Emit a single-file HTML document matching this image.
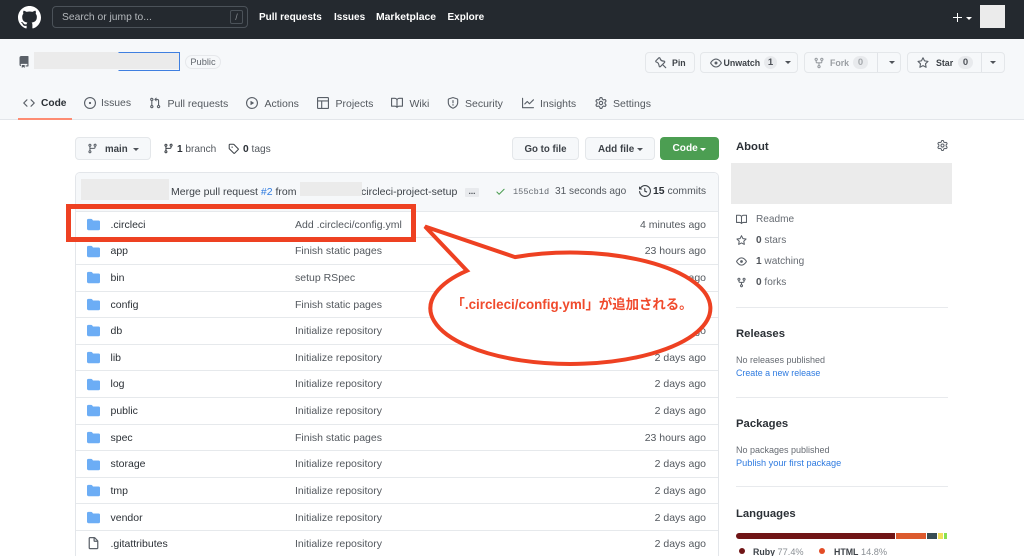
<!DOCTYPE html>
<html lang="ja"><head><meta charset="utf-8"><title>GitHub repository</title>
<style>
*{box-sizing:border-box}
html,body{margin:0;padding:0}
body{width:1024px;height:556px;overflow:hidden;position:relative;background:#fff;font-family:"Liberation Sans","Noto Sans CJK JP",sans-serif;font-size:10.5px;color:#24292f}
#p{position:absolute;left:0;top:0;width:1024px;height:556px;overflow:hidden;filter:blur(.3px)}
.a{position:absolute}
.t{position:absolute;white-space:nowrap;line-height:14px;height:14px;color:#53585e;margin-top:1px}
.b{font-weight:700}
.d{color:#2b3036}
.w{color:#fff;font-weight:700;font-size:10px}
.btn{position:absolute;background:#f6f8fa;border:1px solid #e4e7ea;border-radius:4px}
.line{position:absolute;left:76px;width:642px;height:1px;background:#e6e9ec}
.ic{position:absolute;fill:#5a6068}
.fo{position:absolute;left:87px;width:13px;height:13px;fill:#6cadf5}
.r{right:318px}
.car{position:absolute;width:0;height:0;border-left:3px solid transparent;border-right:3px solid transparent;border-top:3px solid #4f5359}
.cnt{position:absolute;background:#e8eaed;border-radius:8px;height:13px;text-align:center;line-height:13px;font-size:9.5px;font-weight:700;color:#4f5359}
.h{font-size:11.3px;font-weight:700;color:#2b3036}
.s{font-size:9px;color:#666b72}
.l{font-size:8.9px;color:#2f7be0}
.hr{position:absolute;left:736px;width:212px;height:1px;background:#e8eaed}
.bt{font-size:8.8px;color:#3d4248}
.st{font-size:10.1px;color:#666b72}
.st b{color:#4f5359}
</style></head><body><div id="p">
<svg width="0" height="0" style="position:absolute"><defs>
<symbol id="gh" viewBox="0 0 16 16"><path d="M8 0C3.58 0 0 3.58 0 8c0 3.54 2.29 6.53 5.47 7.59.4.07.55-.17.55-.38 0-.19-.01-.82-.01-1.49-2.01.37-2.53-.49-2.69-.94-.09-.23-.48-.94-.82-1.13-.28-.15-.68-.52-.01-.53.63-.01 1.08.58 1.23.82.72 1.21 1.87.87 2.33.66.07-.52.28-.87.51-1.07-1.78-.2-3.64-.89-3.64-3.95 0-.87.31-1.59.82-2.15-.08-.2-.36-1.02.08-2.12 0 0 .67-.21 2.2.82.64-.18 1.32-.27 2-.27.68 0 1.36.09 2 .27 1.53-1.04 2.2-.82 2.2-.82.44 1.1.16 1.92.08 2.12.51.56.82 1.27.82 2.15 0 3.07-1.87 3.75-3.65 3.95.29.25.54.73.54 1.48 0 1.07-.01 1.93-.01 2.2 0 .21.15.46.55.38A8.013 8.013 0 0016 8c0-4.42-3.58-8-8-8z"/></symbol>
<symbol id="repo" viewBox="0 0 16 16"><path d="M2 2.5A2.5 2.5 0 014.5 0h8.75a.75.75 0 01.75.75v12.5a.75.75 0 01-.75.75h-2.5a.75.75 0 110-1.5h1.75v-2h-8a1 1 0 00-.714 1.7.75.75 0 01-1.072 1.05A2.495 2.495 0 012 11.5v-9zm10.5-1V9h-8c-.356 0-.694.074-1 .208V2.5a1 1 0 011-1h8zM5 12.25v3.25a.25.25 0 00.4.2l1.45-1.087a.25.25 0 01.3 0L8.6 15.7a.25.25 0 00.4-.2v-3.25a.25.25 0 00-.25-.25h-3.5a.25.25 0 00-.25.25z"/></symbol>
<symbol id="code" viewBox="0 0 16 16"><path d="M4.72 3.22a.75.75 0 011.06 1.06L2.06 8l3.72 3.72a.75.75 0 11-1.06 1.06L.47 8.53a.75.75 0 010-1.06l4.25-4.25zm6.56 0a.75.75 0 10-1.06 1.06L13.94 8l-3.72 3.72a.75.75 0 101.06 1.06l4.25-4.25a.75.75 0 000-1.06l-4.25-4.25z"/></symbol>
<symbol id="issue" viewBox="0 0 16 16"><path d="M8 9.5a1.5 1.5 0 100-3 1.5 1.5 0 000 3z"/><path fill-rule="evenodd" d="M8 0a8 8 0 100 16A8 8 0 008 0zM1.5 8a6.5 6.5 0 1113 0 6.5 6.5 0 01-13 0z"/></symbol>
<symbol id="pr" viewBox="0 0 16 16"><path fill-rule="evenodd" d="M7.177 3.073L9.573.677A.25.25 0 0110 .854v4.792a.25.25 0 01-.427.177L7.177 3.427a.25.25 0 010-.354zM3.75 2.5a.75.75 0 100 1.5.75.75 0 000-1.5zm-2.25.75a2.25 2.25 0 113 2.122v5.256a2.251 2.251 0 11-1.5 0V5.372A2.25 2.25 0 011.5 3.25zM11 2.5h-1V4h1a1 1 0 011 1v5.628a2.251 2.251 0 101.5 0V5A2.5 2.5 0 0011 2.5zm1 10.25a.75.75 0 111.5 0 .75.75 0 01-1.5 0zM3.75 12a.75.75 0 100 1.5.75.75 0 000-1.5z"/></symbol>
<symbol id="play" viewBox="0 0 16 16"><path fill-rule="evenodd" d="M1.5 8a6.5 6.5 0 1113 0 6.5 6.5 0 01-13 0zM8 0a8 8 0 100 16A8 8 0 008 0zM6.379 5.227A.25.25 0 006 5.442v5.117a.25.25 0 00.379.214l4.264-2.559a.25.25 0 000-.428L6.379 5.227z"/></symbol>
<symbol id="proj" viewBox="0 0 16 16"><path fill-rule="evenodd" d="M1.75 0A1.75 1.75 0 000 1.75v12.5C0 15.216.784 16 1.75 16h12.5A1.75 1.75 0 0016 14.25V1.75A1.75 1.75 0 0014.25 0H1.75zM1.5 1.75a.25.25 0 01.25-.25h12.5a.25.25 0 01.25.25V4.5h-13V1.75zM1.5 6h4v8.5H1.75a.25.25 0 01-.25-.25V6zm5.5 0h7.5v8.25a.25.25 0 01-.25.25H7V6z"/></symbol>
<symbol id="book" viewBox="0 0 16 16"><path fill-rule="evenodd" d="M0 1.75A.75.75 0 01.75 1h4.253c1.227 0 2.317.59 3 1.501A3.744 3.744 0 0111.006 1h4.245a.75.75 0 01.75.75v10.5a.75.75 0 01-.75.75h-4.507a2.25 2.25 0 00-1.591.659l-.622.621a.75.75 0 01-1.06 0l-.622-.621A2.25 2.25 0 005.258 13H.75a.75.75 0 01-.75-.75V1.75zm8.755 3a2.25 2.25 0 012.25-2.25H14.5v9h-3.757c-.71 0-1.4.201-1.992.572l.004-7.322zm-1.504 7.324l.004-5.073-.002-2.253A2.25 2.25 0 005.003 2.5H1.5v9h3.757a3.75 3.75 0 011.994.574z"/></symbol>
<symbol id="shield" viewBox="0 0 16 16"><path fill-rule="evenodd" d="M7.467.133a1.75 1.75 0 011.066 0l5.25 1.68A1.75 1.75 0 0115 3.48V7c0 1.566-.32 3.182-1.303 4.682-.983 1.498-2.585 2.813-5.032 3.855a1.7 1.7 0 01-1.33 0c-2.447-1.042-4.049-2.357-5.032-3.855C1.32 10.182 1 8.566 1 7V3.48a1.75 1.75 0 011.217-1.667l5.25-1.68zm.61 1.429a.25.25 0 00-.153 0l-5.25 1.68a.25.25 0 00-.174.238V7c0 1.358.275 2.666 1.057 3.86.784 1.194 2.121 2.34 4.366 3.297a.2.2 0 00.154 0c2.245-.956 3.582-2.104 4.366-3.298C13.225 9.666 13.5 8.36 13.5 7V3.48a.25.25 0 00-.174-.237l-5.25-1.68zM9 10.5a1 1 0 11-2 0 1 1 0 012 0zm-.25-5.75a.75.75 0 10-1.5 0v3a.75.75 0 001.5 0v-3z"/></symbol>
<symbol id="graph" viewBox="0 0 16 16"><path d="M1.5 1.75a.75.75 0 00-1.5 0v12.5c0 .414.336.75.75.75h14.5a.75.75 0 000-1.5H1.5V1.75zm14.28 2.53a.75.75 0 00-1.06-1.06L10 7.94 7.53 5.47a.75.75 0 00-1.06 0L3.22 8.72a.75.75 0 001.06 1.06L7 7.06l2.47 2.47a.75.75 0 001.06 0l5.25-5.25z"/></symbol>
<symbol id="gear" viewBox="0 0 16 16"><path fill-rule="evenodd" d="M7.429 1.525a6.593 6.593 0 011.142 0c.036.003.108.036.137.146l.289 1.105c.147.56.55.967.997 1.189.174.086.341.183.501.29.417.278.97.423 1.53.27l1.102-.303c.11-.03.175.016.195.046.219.31.41.641.573.989.014.031.022.11-.059.19l-.815.806c-.411.406-.562.957-.53 1.456a4.588 4.588 0 010 .582c-.032.499.119 1.05.53 1.456l.815.806c.08.08.073.159.059.19a6.494 6.494 0 01-.573.99c-.02.029-.086.074-.195.045l-1.103-.303c-.559-.153-1.112-.008-1.529.27-.16.107-.327.204-.5.29-.449.222-.851.628-.998 1.189l-.289 1.105c-.029.11-.101.143-.137.146a6.613 6.613 0 01-1.142 0c-.036-.003-.108-.037-.137-.146l-.289-1.105c-.147-.56-.55-.967-.997-1.189a4.502 4.502 0 01-.501-.29c-.417-.278-.97-.423-1.53-.27l-1.102.303c-.11.03-.175-.016-.195-.046a6.492 6.492 0 01-.573-.989c-.014-.031-.022-.11.059-.19l.815-.806c.411-.406.562-.957.53-1.456a4.587 4.587 0 010-.582c.032-.499-.119-1.05-.53-1.456l-.815-.806c-.08-.08-.073-.159-.059-.19a6.44 6.44 0 01.573-.99c.02-.029.086-.075.195-.045l1.103.303c.559.153 1.112.008 1.529-.27.16-.107.327-.204.5-.29.449-.222.851-.628.998-1.189l.289-1.105c.029-.11.101-.143.137-.146zM8 0c-.236 0-.47.01-.701.03-.743.065-1.29.615-1.458 1.261l-.29 1.106c-.017.066-.078.158-.211.224a5.994 5.994 0 00-.668.386c-.123.082-.233.09-.3.071L3.27 2.776c-.644-.177-1.392.02-1.82.63a7.977 7.977 0 00-.704 1.217c-.315.675-.111 1.422.363 1.891l.815.806c.05.048.098.147.088.294a6.084 6.084 0 000 .772c.01.147-.038.246-.088.294l-.815.806c-.474.469-.678 1.216-.363 1.891.2.428.436.835.704 1.218.428.609 1.176.806 1.82.63l1.103-.303c.066-.019.176-.011.299.071.213.143.436.272.668.386.133.066.194.158.212.224l.289 1.106c.169.646.715 1.196 1.458 1.26a8.094 8.094 0 001.402 0c.743-.064 1.29-.614 1.458-1.26l.29-1.106c.017-.066.078-.158.211-.224a5.98 5.98 0 00.668-.386c.123-.082.233-.09.3-.071l1.102.302c.644.177 1.392-.02 1.82-.63.268-.382.505-.789.704-1.217.315-.675.111-1.422-.364-1.891l-.814-.806c-.05-.048-.098-.147-.088-.294a6.1 6.1 0 000-.772c-.01-.147.039-.246.088-.294l.814-.806c.475-.469.679-1.216.364-1.891a7.992 7.992 0 00-.704-1.218c-.428-.609-1.176-.806-1.82-.63l-1.103.303c-.066.019-.176.011-.299-.071a5.991 5.991 0 00-.668-.386c-.133-.066-.194-.158-.212-.224L10.16 1.29C9.99.645 9.444.095 8.701.031A8.094 8.094 0 008 0zm1.5 8a1.5 1.5 0 11-3 0 1.5 1.5 0 013 0zM11 8a3 3 0 11-6 0 3 3 0 016 0z"/></symbol>
<symbol id="pin" viewBox="0 0 16 16"><path fill-rule="evenodd" d="M4.456.734a1.75 1.75 0 012.826.504l.613 1.327a3.081 3.081 0 002.084 1.707l2.454.584c1.332.317 1.8 1.972.832 2.94L11.06 10l3.72 3.72a.75.75 0 11-1.061 1.06L10 11.06l-2.204 2.205c-.968.968-2.623.5-2.94-.832l-.584-2.454a3.081 3.081 0 00-1.707-2.084l-1.327-.613a1.75 1.75 0 01-.504-2.826L4.456.734zM5.92 1.866a.25.25 0 00-.404-.072L1.794 5.516a.25.25 0 00.072.404l1.328.613A4.582 4.582 0 015.73 9.63l.584 2.454a.25.25 0 00.42.12l5.47-5.47a.25.25 0 00-.12-.42L9.63 6.13a4.581 4.581 0 01-3.098-2.537L5.92 1.866z"/></symbol>
<symbol id="eye" viewBox="0 0 16 16"><path fill-rule="evenodd" d="M1.679 7.932c.412-.621 1.242-1.75 2.366-2.717C5.175 4.242 6.527 3.5 8 3.5c1.473 0 2.824.742 3.955 1.715 1.124.967 1.954 2.096 2.366 2.717a.119.119 0 010 .136c-.412.621-1.242 1.75-2.366 2.717C10.825 11.758 9.473 12.5 8 12.5c-1.473 0-2.824-.742-3.955-1.715C2.92 9.818 2.09 8.69 1.679 8.068a.119.119 0 010-.136zM8 2c-1.981 0-3.67.992-4.933 2.078C1.797 5.169.88 6.423.43 7.1a1.619 1.619 0 000 1.798c.45.678 1.367 1.932 2.637 3.024C4.329 13.008 6.019 14 8 14c1.981 0 3.67-.992 4.933-2.078 1.27-1.091 2.187-2.345 2.637-3.023a1.619 1.619 0 000-1.798c-.45-.678-1.367-1.932-2.637-3.023C11.671 2.992 9.981 2 8 2zm0 8a2 2 0 100-4 2 2 0 000 4z"/></symbol>
<symbol id="fork" viewBox="0 0 16 16"><path fill-rule="evenodd" d="M5 3.25a.75.75 0 11-1.5 0 .75.75 0 011.5 0zm0 2.122a2.25 2.25 0 10-1.5 0v.878A2.25 2.25 0 005.75 8.5h1.5v2.128a2.251 2.251 0 101.5 0V8.5h1.5a2.25 2.25 0 002.25-2.25v-.878a2.25 2.25 0 10-1.5 0v.878a.75.75 0 01-.75.75h-4.5A.75.75 0 015 6.25v-.878zm3.75 7.378a.75.75 0 11-1.5 0 .75.75 0 011.5 0zm3-8.75a.75.75 0 100-1.5.75.75 0 000 1.5z"/></symbol>
<symbol id="star" viewBox="0 0 16 16"><path fill-rule="evenodd" d="M8 .25a.75.75 0 01.673.418l1.882 3.815 4.21.612a.75.75 0 01.416 1.279l-3.046 2.97.719 4.192a.75.75 0 01-1.088.791L8 12.347l-3.766 1.98a.75.75 0 01-1.088-.79l.72-4.194L.818 6.374a.75.75 0 01.416-1.28l4.21-.611L7.327.668A.75.75 0 018 .25zm0 2.445L6.615 5.5a.75.75 0 01-.564.41l-3.097.45 2.24 2.184a.75.75 0 01.216.664l-.528 3.084 2.769-1.456a.75.75 0 01.698 0l2.77 1.456-.53-3.084a.75.75 0 01.216-.664l2.24-2.183-3.096-.45a.75.75 0 01-.564-.41L8 2.694z"/></symbol>
<symbol id="branch" viewBox="0 0 16 16"><path fill-rule="evenodd" d="M11.75 2.5a.75.75 0 100 1.5.75.75 0 000-1.5zm-2.25.75a2.25 2.25 0 113 2.122V6A2.5 2.5 0 0110 8.5H6a1 1 0 00-1 1v1.128a2.251 2.251 0 11-1.5 0V5.372a2.25 2.25 0 111.5 0v1.836A2.492 2.492 0 016 7h4a1 1 0 001-1v-.628A2.25 2.25 0 019.5 3.25zM4.25 12a.75.75 0 100 1.5.75.75 0 000-1.5zM3.5 3.25a.75.75 0 111.5 0 .75.75 0 01-1.5 0z"/></symbol>
<symbol id="tag" viewBox="0 0 16 16"><path fill-rule="evenodd" d="M2.5 7.775V2.75a.25.25 0 01.25-.25h5.025a.25.25 0 01.177.073l6.25 6.25a.25.25 0 010 .354l-5.025 5.025a.25.25 0 01-.354 0l-6.25-6.25a.25.25 0 01-.073-.177zm-1.5 0V2.75C1 1.784 1.784 1 2.75 1h5.025c.464 0 .91.184 1.238.513l6.25 6.25a1.75 1.75 0 010 2.474l-5.026 5.026a1.75 1.75 0 01-2.474 0l-6.25-6.25A1.75 1.75 0 011 7.775zM6 5a1 1 0 100 2 1 1 0 000-2z"/></symbol>
<symbol id="hist" viewBox="0 0 16 16"><path fill-rule="evenodd" d="M1.643 3.143L.427 1.927A.25.25 0 000 2.104V5.75c0 .138.112.25.25.25h3.646a.25.25 0 00.177-.427L2.715 4.215a6.5 6.5 0 11-1.18 4.458.75.75 0 10-1.493.154 8.001 8.001 0 101.6-5.684zM7.75 4a.75.75 0 01.75.75v2.992l2.028.812a.75.75 0 01-.557 1.392l-2.5-1A.75.75 0 017 8.25v-3.5A.75.75 0 017.75 4z"/></symbol>
<symbol id="check" viewBox="0 0 16 16"><path d="M13.78 4.22a.75.75 0 010 1.06l-7.25 7.25a.75.75 0 01-1.06 0L2.22 9.28a.75.75 0 011.06-1.06L6 10.94l6.72-6.72a.75.75 0 011.06 0z"/></symbol>
<symbol id="folder" viewBox="0 0 16 16"><path d="M1.75 1A1.75 1.75 0 000 2.75v10.5C0 14.216.784 15 1.75 15h12.5A1.75 1.75 0 0016 13.25v-8.5A1.75 1.75 0 0014.25 3H7.5a.25.25 0 01-.2-.1l-.9-1.2C6.07 1.26 5.55 1 5 1H1.75z"/></symbol>
<symbol id="file" viewBox="0 0 16 16"><path fill-rule="evenodd" d="M3.75 1.5a.25.25 0 00-.25.25v11.5c0 .138.112.25.25.25h8.5a.25.25 0 00.25-.25V6H9.75A1.75 1.75 0 018 4.25V1.5H3.75zm5.75.56v2.19c0 .138.112.25.25.25h2.19L9.5 2.06zM2 1.75C2 .784 2.784 0 3.75 0h5.086c.464 0 .909.184 1.237.513l3.414 3.414c.329.328.513.773.513 1.237v8.086A1.75 1.75 0 0112.25 15h-8.5A1.75 1.75 0 012 13.25V1.75z"/></symbol>
</defs></svg>

<!-- header -->
<div class="a" style="left:0;top:0;width:1024px;height:39px;background:#24292f"></div>
<svg class="a" style="left:18px;top:6px;width:23px;height:23px;fill:#fff"><use href="#gh"/></svg>
<div class="a" style="left:52px;top:6px;width:196px;height:22px;border:1px solid #4b5259;border-radius:4px"></div>
<div class="t" style="left:62px;top:10px;color:#b4b8bc;font-size:10.3px">Search or jump to...</div>
<div class="a" style="left:230px;top:10px;width:13px;height:14px;border:1px solid #4b5259;border-radius:2px;color:#8b9096;font-size:9px;line-height:12px;text-align:center">/</div>
<div class="t w" style="left:259px;top:10px">Pull requests</div>
<div class="t w" style="left:334px;top:10px">Issues</div>
<div class="t w" style="left:376px;top:10px;font-size:10.4px">Marketplace</div>
<div class="t w" style="left:447.5px;top:10px">Explore</div>
<div class="a" style="left:953px;top:16.5px;width:9px;height:1.4px;background:#fff"></div>
<div class="a" style="left:957px;top:12.5px;width:1.4px;height:9px;background:#fff"></div>
<div class="car" style="left:966px;top:16.5px;border-top-color:#fff"></div>
<div class="a" style="left:980px;top:5px;width:25px;height:23px;background:#ebebeb"></div>

<!-- subnav -->
<div class="a" style="left:0;top:39px;width:1024px;height:81px;background:#f6f8fa;border-bottom:1px solid #e3e6ea"></div>
<svg class="ic" style="left:18px;top:56px;width:12px;height:12px"><use href="#repo"/></svg>
<div class="a" style="left:34px;top:52px;width:146px;height:17px;background:#ebebeb"></div>
<div class="a" style="left:118px;top:52px;width:62px;height:19px;border:1px solid transparent;border-top-color:#3f7fe0;border-right-color:#3f7fe0;border-bottom-color:#3f7fe0"></div>
<div class="a" style="left:185px;top:55px;width:36px;height:14px;border:1px solid #e6e8eb;border-radius:7px;font-size:9.3px;line-height:12px;text-align:center;color:#62676e">Public</div>

<div class="btn" style="left:645px;top:52px;width:50px;height:21px"></div>
<svg class="ic" style="left:655px;top:57px;width:12px;height:12px"><use href="#pin"/></svg>
<div class="t b bt" style="left:672px;top:54.5px">Pin</div>
<div class="btn" style="left:700px;top:52px;width:98px;height:21px"></div>
<svg class="ic" style="left:709.5px;top:57px;width:12px;height:12px"><use href="#eye"/></svg>
<div class="t b bt" style="left:723.5px;top:54.5px">Unwatch</div>
<div class="cnt" style="left:764px;top:56px;width:13px">1</div>
<div class="car" style="left:785px;top:61px"></div>
<div class="btn" style="left:804px;top:52px;width:97px;height:21px"></div>
<div class="a" style="left:877px;top:53px;width:1px;height:19px;background:#e1e4e8"></div>
<svg class="ic" style="left:813px;top:57px;width:12px;height:12px;fill:#9a9ea3"><use href="#fork"/></svg>
<div class="t b bt" style="left:830px;top:54.5px;color:#9a9ea3">Fork</div>
<div class="cnt" style="left:853px;top:56px;width:15px;color:#a5a9ad">0</div>
<div class="car" style="left:889px;top:61px"></div>
<div class="btn" style="left:907px;top:52px;width:98px;height:21px"></div>
<div class="a" style="left:981px;top:53px;width:1px;height:19px;background:#e1e4e8"></div>
<svg class="ic" style="left:917px;top:57px;width:12px;height:12px"><use href="#star"/></svg>
<div class="t b bt" style="left:936px;top:54.5px">Star</div>
<div class="cnt" style="left:958px;top:56px;width:15px">0</div>
<div class="car" style="left:990px;top:61px"></div>

<!-- tabs -->
<svg class="ic" style="left:23px;top:97px;width:12px;height:12px"><use href="#code"/></svg>
<div class="t b d" style="left:41px;top:96px;font-size:10.2px">Code</div>
<svg class="ic" style="left:84px;top:97px;width:12px;height:12px"><use href="#issue"/></svg>
<div class="t" style="left:101px;top:96px;font-size:10.4px">Issues</div>
<svg class="ic" style="left:149px;top:97px;width:12px;height:12px"><use href="#pr"/></svg>
<div class="t" style="left:167.5px;top:96px">Pull requests</div>
<svg class="ic" style="left:246px;top:97px;width:12px;height:12px"><use href="#play"/></svg>
<div class="t" style="left:264.5px;top:96px">Actions</div>
<svg class="ic" style="left:317px;top:97px;width:12px;height:12px"><use href="#proj"/></svg>
<div class="t" style="left:335.5px;top:96px">Projects</div>
<svg class="ic" style="left:391px;top:97px;width:12px;height:12px"><use href="#book"/></svg>
<div class="t" style="left:409.5px;top:96px">Wiki</div>
<svg class="ic" style="left:446.5px;top:97px;width:12px;height:12px"><use href="#shield"/></svg>
<div class="t" style="left:465px;top:96px">Security</div>
<svg class="ic" style="left:521.5px;top:97px;width:12px;height:12px"><use href="#graph"/></svg>
<div class="t" style="left:540px;top:96px">Insights</div>
<svg class="ic" style="left:595px;top:97px;width:12px;height:12px"><use href="#gear"/></svg>
<div class="t" style="left:613px;top:96px">Settings</div>
<div class="a" style="left:18px;top:118px;width:54px;height:2px;background:#fd8c73"></div>

<!-- toolbar -->
<div class="btn" style="left:75px;top:137px;width:76px;height:23px"></div>
<svg class="ic" style="left:87px;top:143px;width:11px;height:11px"><use href="#branch"/></svg>
<div class="t b" style="left:105px;top:142px;color:#3d4248;font-size:9.7px">main</div>
<div class="car" style="left:133px;top:148px"></div>
<svg class="ic" style="left:163px;top:143px;width:11px;height:11px;fill:#3d4248"><use href="#branch"/></svg>
<div class="t" style="left:177px;top:142px;font-size:10.1px"><b class="d">1</b> branch</div>
<svg class="ic" style="left:228px;top:143px;width:11px;height:11px;fill:#3d4248"><use href="#tag"/></svg>
<div class="t" style="left:243px;top:142px;font-size:10.2px"><b class="d">0</b> tags</div>
<div class="btn" style="left:512px;top:137px;width:67px;height:23px;text-align:center;line-height:23px;font-weight:700;font-size:9.7px;color:#3d4248">Go to file</div>
<div class="btn" style="left:585px;top:137px;width:70px;height:23px;line-height:23px;padding-left:12px;font-weight:700;font-size:9.9px;color:#3d4248">Add file</div>
<div class="car" style="left:637px;top:148px"></div>
<div class="a" style="left:660px;top:137px;width:59px;height:23px;background:#4c9e52;border-radius:4px;color:#fff;font-weight:700;font-size:10.1px;line-height:24px;padding-left:12.5px">Code</div>
<div class="car" style="left:700px;top:148px;border-top-color:#fff"></div>

<!-- file table -->
<div class="a" style="left:75px;top:172px;width:644px;height:384px;border:1px solid #e3e6ea;border-bottom:0;border-radius:5px 5px 0 0"></div>
<div class="a" style="left:76px;top:173px;width:642px;height:38px;background:#f6f8fa;border-radius:4px 4px 0 0"></div>
<div class="a" style="left:81px;top:179px;width:88px;height:21px;background:#ebebeb"></div>
<div class="t" style="left:171px;top:184px;color:#3d4248">Merge pull request <span style="color:#2f7be0">#2</span> from</div>
<div class="t" style="left:361px;top:184px;color:#3d4248">circleci-project-setup</div>
<div class="a" style="left:300px;top:182px;width:62px;height:14px;background:#ebebeb"></div>
<div class="a" style="left:465px;top:188px;width:14px;height:9px;background:#e8eaed;border-radius:1px;font-size:8px;font-weight:700;line-height:7px;text-align:center;color:#3d4248">...</div>
<svg class="ic" style="left:495px;top:186px;width:11px;height:11px;fill:#4c9e52"><use href="#check"/></svg>
<div class="t" style="left:513px;top:184px;font-family:'Liberation Mono',monospace;font-size:8.6px;color:#62676e">155cb1d</div>
<div class="t" style="left:555px;top:184px;font-size:10.1px">31 seconds ago</div>
<svg class="ic" style="left:638.5px;top:185px;width:12px;height:12px;fill:#3d4248"><use href="#hist"/></svg>
<div class="t" style="left:653px;top:184px;font-size:10.4px"><b class="d">15</b> commits</div>

<div class="line" style="top:211px"></div>
<div class="line" style="top:237px"></div>
<div class="line" style="top:264px"></div>
<div class="line" style="top:291px"></div>
<div class="line" style="top:317px"></div>
<div class="line" style="top:344px"></div>
<div class="line" style="top:370px"></div>
<div class="line" style="top:397px"></div>
<div class="line" style="top:424px"></div>
<div class="line" style="top:450px"></div>
<div class="line" style="top:477px"></div>
<div class="line" style="top:503px"></div>
<div class="line" style="top:530px"></div>

<svg class="fo" style="top:218px"><use href="#folder"/></svg><div class="t d" style="left:110.5px;top:216.5px">.circleci</div><div class="t" style="left:295px;top:216.5px">Add .circleci/config.yml</div><div class="t r" style="top:216.5px">4 minutes ago</div>
<svg class="fo" style="top:245px"><use href="#folder"/></svg><div class="t d" style="left:110.5px;top:243px">app</div><div class="t" style="left:295px;top:243px">Finish static pages</div><div class="t r" style="top:243px">23 hours ago</div>
<svg class="fo" style="top:271px"><use href="#folder"/></svg><div class="t d" style="left:110.5px;top:270px">bin</div><div class="t" style="left:295px;top:270px">setup RSpec</div><div class="t r" style="top:270px">2 days ago</div>
<svg class="fo" style="top:298px"><use href="#folder"/></svg><div class="t d" style="left:110.5px;top:296.5px">config</div><div class="t" style="left:295px;top:296.5px">Finish static pages</div><div class="t r" style="top:296.5px">2 days ago</div>
<svg class="fo" style="top:324px"><use href="#folder"/></svg><div class="t d" style="left:110.5px;top:323px">db</div><div class="t" style="left:295px;top:323px">Initialize repository</div><div class="t r" style="top:323px">2 days ago</div>
<svg class="fo" style="top:351px"><use href="#folder"/></svg><div class="t d" style="left:110.5px;top:349.5px">lib</div><div class="t" style="left:295px;top:349.5px">Initialize repository</div><div class="t r" style="top:349.5px">2 days ago</div>
<svg class="fo" style="top:378px"><use href="#folder"/></svg><div class="t d" style="left:110.5px;top:376px">log</div><div class="t" style="left:295px;top:376px">Initialize repository</div><div class="t r" style="top:376px">2 days ago</div>
<svg class="fo" style="top:404px"><use href="#folder"/></svg><div class="t d" style="left:110.5px;top:403px">public</div><div class="t" style="left:295px;top:403px">Initialize repository</div><div class="t r" style="top:403px">2 days ago</div>
<svg class="fo" style="top:431px"><use href="#folder"/></svg><div class="t d" style="left:110.5px;top:429.5px">spec</div><div class="t" style="left:295px;top:429.5px">Finish static pages</div><div class="t r" style="top:429.5px">23 hours ago</div>
<svg class="fo" style="top:458px"><use href="#folder"/></svg><div class="t d" style="left:110.5px;top:456px">storage</div><div class="t" style="left:295px;top:456px">Initialize repository</div><div class="t r" style="top:456px">2 days ago</div>
<svg class="fo" style="top:484px"><use href="#folder"/></svg><div class="t d" style="left:110.5px;top:483px">tmp</div><div class="t" style="left:295px;top:483px">Initialize repository</div><div class="t r" style="top:483px">2 days ago</div>
<svg class="fo" style="top:511px"><use href="#folder"/></svg><div class="t d" style="left:110.5px;top:509.5px">vendor</div><div class="t" style="left:295px;top:509.5px">Initialize repository</div><div class="t r" style="top:509.5px">2 days ago</div>
<svg class="fo" style="top:537px;fill:#5a6068"><use href="#file"/></svg><div class="t d" style="left:110.5px;top:536px">.gitattributes</div><div class="t" style="left:295px;top:536px">Initialize repository</div><div class="t r" style="top:536px">2 days ago</div>

<!-- sidebar -->
<div class="t h" style="left:736px;top:139px">About</div>
<svg class="ic" style="left:937px;top:140px;width:11px;height:11px"><use href="#gear"/></svg>
<div class="a" style="left:731px;top:163px;width:221px;height:41px;background:#ebebeb"></div>
<svg class="ic" style="left:736px;top:214px;width:11px;height:11px"><use href="#book"/></svg>
<div class="t st" style="left:756px;top:212px">Readme</div>
<svg class="ic" style="left:736px;top:235px;width:11px;height:11px"><use href="#star"/></svg>
<div class="t st" style="left:756px;top:233px"><b>0</b> stars</div>
<svg class="ic" style="left:736px;top:256px;width:11px;height:11px"><use href="#eye"/></svg>
<div class="t st" style="left:756px;top:254px"><b>1</b> watching</div>
<svg class="ic" style="left:736px;top:277px;width:11px;height:11px"><use href="#fork"/></svg>
<div class="t st" style="left:756px;top:275px"><b>0</b> forks</div>
<div class="hr" style="top:307px"></div>
<div class="t h" style="left:736px;top:326px">Releases</div>
<div class="t s" style="left:736px;top:352px">No releases published</div>
<div class="t l" style="left:736px;top:365px">Create a new release</div>
<div class="hr" style="top:397px"></div>
<div class="t h" style="left:736px;top:416px">Packages</div>
<div class="t s" style="left:736px;top:442px">No packages published</div>
<div class="t l" style="left:736px;top:455px;font-size:9.2px">Publish your first package</div>
<div class="hr" style="top:486px"></div>
<div class="t h" style="left:736px;top:506px">Languages</div>
<div class="a" style="left:736px;top:533px;width:159px;height:6px;background:#701516;border-radius:3px 0 0 3px"></div>
<div class="a" style="left:896px;top:533px;width:30px;height:6px;background:#dc5a2e"></div>
<div class="a" style="left:927px;top:533px;width:10px;height:6px;background:#384d54"></div>
<div class="a" style="left:938px;top:533px;width:5px;height:6px;background:#f1e05a"></div>
<div class="a" style="left:944px;top:533px;width:3px;height:6px;background:#89e051"></div>
<div class="a" style="left:739px;top:548px;width:6px;height:6px;border-radius:50%;background:#701516"></div>
<div class="t" style="left:753px;top:543.5px;font-size:9.2px;color:#8a8f94"><b style="color:#3d4248;font-size:8.8px">Ruby</b> 77.4%</div>
<div class="a" style="left:819px;top:548px;width:6px;height:6px;border-radius:50%;background:#e34c26"></div>
<div class="t" style="left:834px;top:543.5px;font-size:9.2px;color:#8a8f94"><b style="color:#3d4248;font-size:8.8px">HTML</b> 14.8%</div>

<!-- annotation -->
<div class="a" style="left:66px;top:204px;width:350px;height:38px;border:5px solid #ee4122"></div>
<svg class="a" style="left:0;top:0" width="1024" height="556"><path d="M467 270.7 L425 226.5 L515 257.1 A140 55.7 0 1 1 467 270.7 Z" fill="#fff" stroke="#ee4122" stroke-width="4" stroke-linejoin="miter"/></svg>
<div class="a" style="left:451.5px;top:296px;white-space:nowrap;line-height:18px;font-size:13.4px;font-weight:700;color:#f04a2c;font-family:'Liberation Sans','Noto Sans CJK JP',sans-serif">「.circleci/config.yml」が追加される。</div>
</div></body></html>
